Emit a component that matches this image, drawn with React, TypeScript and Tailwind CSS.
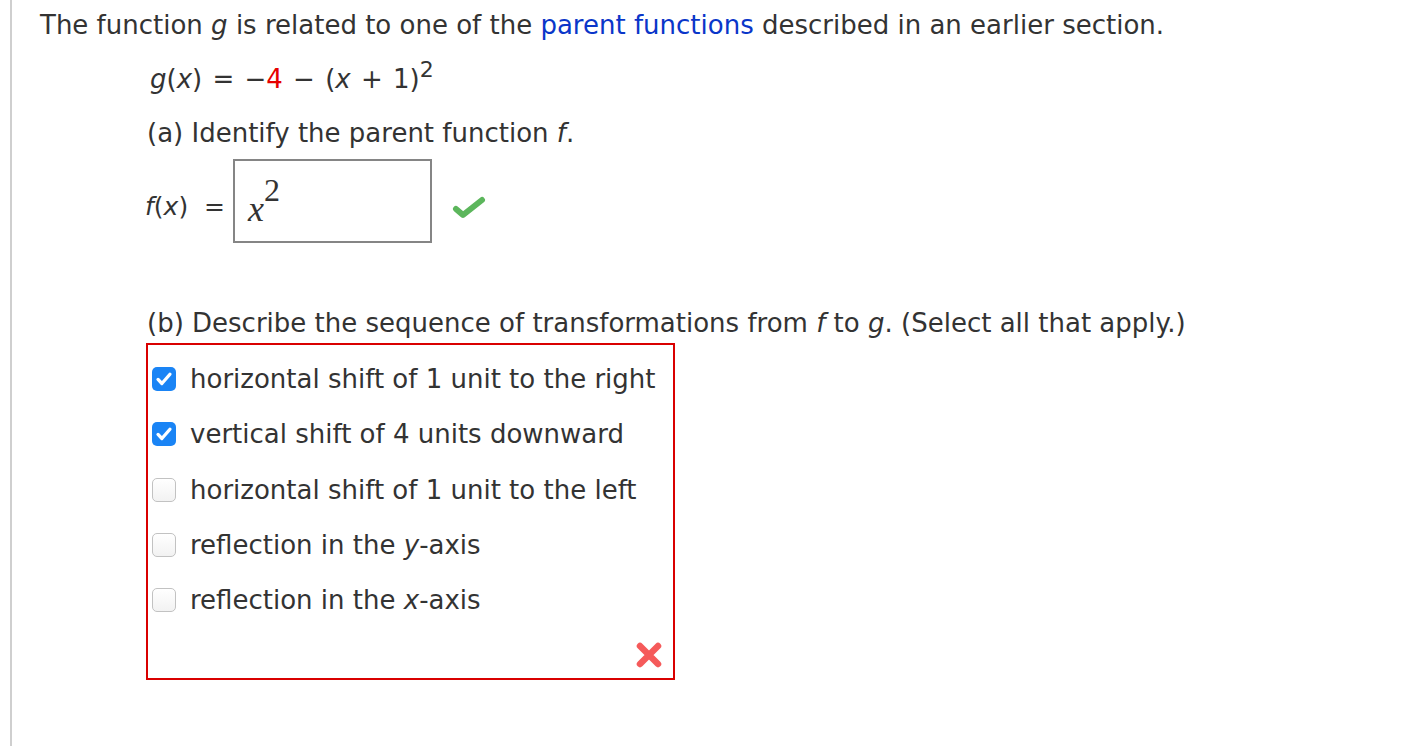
import React from 'react';

const options = [
  { label: 'horizontal shift of 1 unit to the right', checked: true },
  { label: 'vertical shift of 4 units downward', checked: true },
  { label: 'horizontal shift of 1 unit to the left', checked: false },
  { label: 'reflection in the ', axis: 'y', checked: false },
  { label: 'reflection in the ', axis: 'x', checked: false },
];

const Box: React.FC<{ checked: boolean }> = ({ checked }) =>
  checked ? (
    <span className="flex h-6 w-6 shrink-0 items-center justify-center rounded-[5px] bg-[#1a84f5]">
      <svg viewBox="0 0 24 24" className="h-[22px] w-[22px]" fill="none">
        <path d="M5.5 12.5l4.2 4.4L18.5 6.8" stroke="white" strokeWidth="3.6" strokeLinecap="round" strokeLinejoin="round" />
      </svg>
    </span>
  ) : (
    <span className="block h-6 w-6 shrink-0 rounded-[5px] border border-[#c2c2c2] bg-gradient-to-b from-white to-[#f2f2f2]" />
  );

export default function App() {
  return (
    <div className="min-h-[746px] bg-white text-[#333] font-['DejaVu_Sans',Verdana,sans-serif]">
      <div className="ml-[10px] min-h-[746px] border-l-2 border-[#cfcfcf] pl-[28px] pt-[8px] text-[26px] leading-[34px]">
        <p>
          The function <i>g</i> is related to one of the{' '}
          <span className="text-[#0a36c9]">parent functions</span> described in an earlier section.
        </p>

        <div className="ml-[107px]">
          <p className="mt-[20px] pl-[3px] [word-spacing:2px]">
            <i>g</i>(<i>x</i>) = −<span className="text-[#e60000]">4</span> − (<i>x</i> + 1)
            <sup className="text-[22px]">2</sup>
          </p>

          <p className="mt-[20px]">
            (a) Identify the parent function <i>f</i>.
          </p>

          <div className="mt-[9px] flex items-start">
            <span className="mt-[31px] ml-[-2px] w-[88px] text-[25px]">
              <i>f</i>(<i>x</i>)&nbsp;&nbsp;=
            </span>
            <div className="h-[84px] w-[199px] border-2 border-[#858585] pl-[13px] pt-[26px] leading-[44px] font-['Liberation_Serif',serif]">
              <span className="text-[36px] italic">x</span>
              <sup className="relative top-[-20px] text-[32px]">2</sup>
            </div>
            <svg viewBox="0 0 34 24" className="ml-[20px] mt-[37px] h-[24px] w-[34px]" fill="none">
              <path d="M4 13l7 6L30 4" stroke="#5cb65c" strokeWidth="6" strokeLinecap="round" strokeLinejoin="round" />
            </svg>
          </div>

          <p className="mt-[63px]">
            (b) Describe the sequence of transformations from <i>f</i> to <i>g</i>. (Select all that apply.)
          </p>

          <div className="mt-[3px] ml-[-1px] flex h-[337px] w-[529px] flex-col border-2 border-[#d90000] pt-[20px] pl-[4px]">
            {options.map((o, i) => (
              <div key={i} className="mb-[27.3px] flex h-[28px] items-center gap-[14px]">
                <Box checked={o.checked} />
                <span className="leading-[28px]">
                  {o.label}
                  {o.axis && (
                    <>
                      <i>{o.axis}</i>-axis
                    </>
                  )}
                </span>
              </div>
            ))}
            <div className="mt-auto mb-[12px] flex justify-end pr-[9px]">
              <svg viewBox="0 0 30 28" className="h-[28px] w-[30px]" fill="none">
                <path d="M6 5l18 18M24 5L6 23" stroke="#f55a5a" strokeWidth="6.5" strokeLinecap="round" />
              </svg>
            </div>
          </div>
        </div>
      </div>
    </div>
  );
}
